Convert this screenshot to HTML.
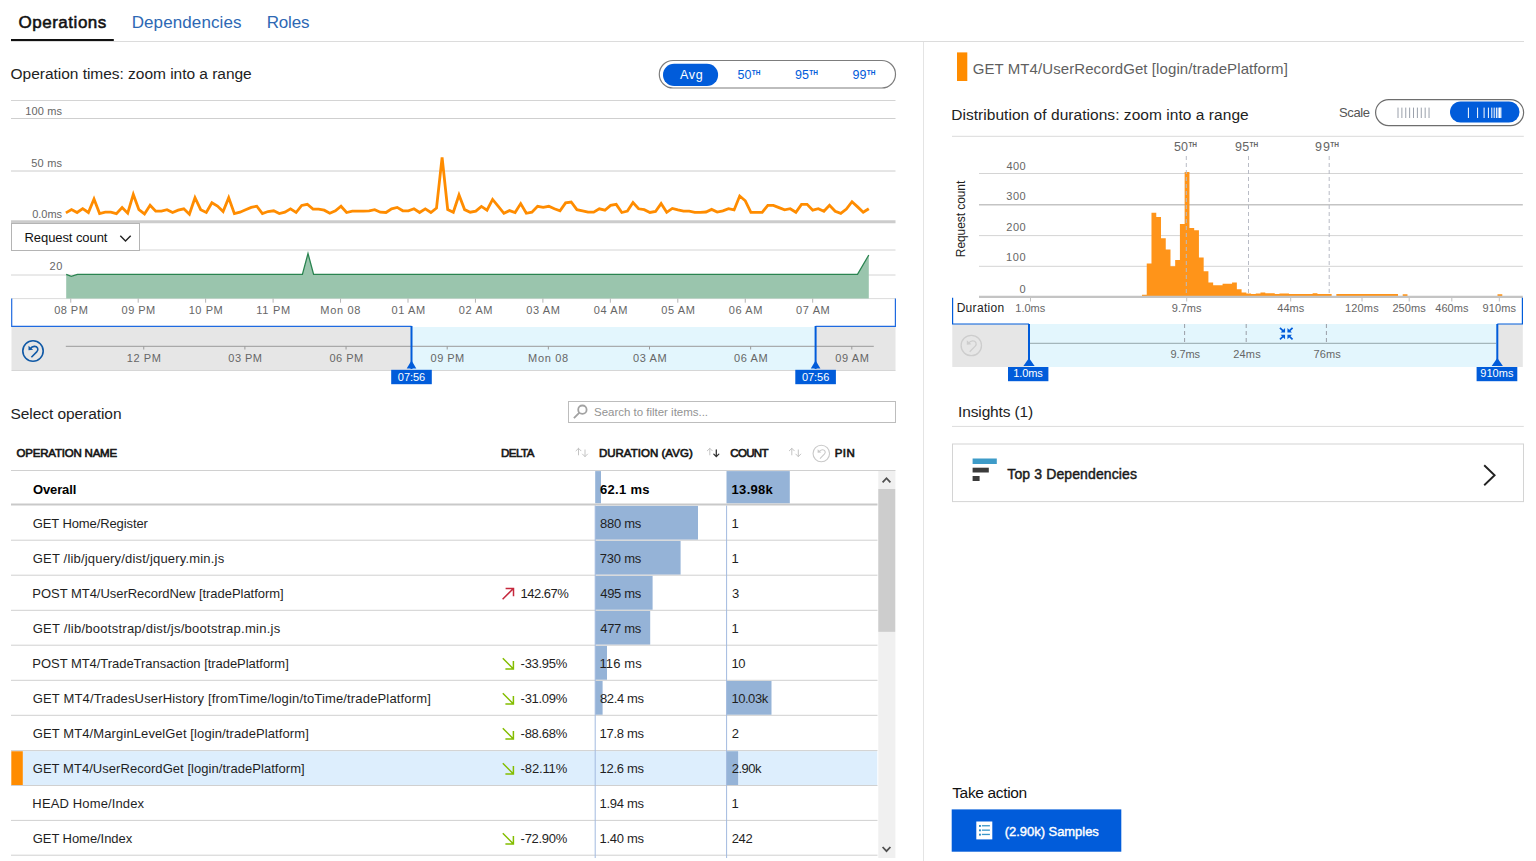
<!DOCTYPE html>
<html lang="en">
<head>
<meta charset="utf-8">
<title>Performance - Operations</title>
<style>
html,body{margin:0;padding:0;background:#fff;}
body{width:1536px;height:861px;overflow:hidden;position:relative;font-family:"Liberation Sans",sans-serif;}
#page{position:absolute;left:0;top:0;width:1536px;height:861px;overflow:hidden;background:#fff;}
#gfx{position:absolute;left:0;top:0;}
.t{position:absolute;white-space:pre;font-family:"Liberation Sans",sans-serif;}
</style>
</head>
<body>
<div id="page">
<svg id="gfx" width="1536" height="861" viewBox="0 0 1536 861">
<line x1="11" y1="41.5" x2="1524" y2="41.5" stroke="#dcdcdc" stroke-width="1" />
<rect x="11.00" y="39.00" width="102.80" height="2.00" fill="#111" />
<line x1="923.5" y1="42" x2="923.5" y2="861" stroke="#e4e4e4" stroke-width="1" />
<rect x="659.3" y="60.5" width="236.2" height="27.5" rx="13.75" fill="#fff" stroke="#7d7d7d" stroke-width="1.2"/>
<rect x="663" y="63.8" width="55.1" height="22.3" rx="11.15" fill="#015cda"/>
<line x1="11" y1="100.5" x2="895.5" y2="100.5" stroke="#d4d4d4" stroke-width="1" />
<line x1="11" y1="118.5" x2="895.5" y2="118.5" stroke="#cfcfcf" stroke-width="1" />
<line x1="11" y1="171" x2="895.5" y2="171" stroke="#cccccc" stroke-width="1" />
<line x1="11" y1="221.7" x2="895.5" y2="221.7" stroke="#cccccc" stroke-width="3" />
<polyline points="65.9,212.9 71.5,209.5 77.1,212.5 82.7,208.6 88.4,212.5 94.0,199.0 99.6,213.6 105.2,212.2 110.8,212.2 116.4,213.6 122.1,207.5 127.7,213.2 133.3,194.4 138.9,209.7 144.5,213.9 150.1,205.2 155.7,211.1 161.4,211.1 167.0,209.7 172.6,212.5 178.2,210.2 183.8,208.8 189.4,214.3 195.0,197.7 200.7,209.7 206.3,212.5 211.9,202.7 217.5,206.1 223.1,211.5 228.7,197.7 234.4,213.6 240.0,212.2 245.6,209.8 251.2,207.4 256.8,206.2 262.4,213.6 268.0,211.5 273.7,210.8 279.3,213.6 284.9,212.2 290.5,208.9 296.1,212.5 301.7,205.4 307.3,204.3 313.0,209.1 318.6,209.1 324.2,210.2 329.8,213.3 335.4,210.8 341.0,206.2 346.6,212.5 352.3,211.1 357.9,211.1 363.5,211.1 369.1,210.8 374.7,209.7 380.3,212.2 386.0,212.5 391.6,208.8 397.2,207.4 402.8,210.8 408.4,210.8 414.0,208.8 419.6,212.5 425.3,208.9 430.9,212.5 436.5,208.1 442.1,157.4 447.7,209.5 453.3,212.2 459.0,195.0 464.6,209.6 470.2,212.2 475.8,211.1 481.4,206.4 487.0,210.2 492.6,199.4 498.3,206.3 503.9,213.3 509.5,210.6 515.1,212.5 520.7,203.6 526.3,213.3 531.9,212.2 537.6,206.3 543.2,207.4 548.8,206.3 554.4,208.8 560.0,210.8 565.6,202.9 571.2,202.0 576.9,209.7 582.5,210.8 588.1,212.2 593.7,212.2 599.3,208.8 604.9,210.2 610.6,205.4 616.2,204.4 621.8,212.5 627.4,211.1 633.0,202.6 638.6,208.8 644.2,209.7 649.9,212.5 655.5,211.5 661.1,203.6 666.7,212.3 672.3,208.4 677.9,209.9 683.5,211.2 689.2,211.2 694.8,212.3 700.4,212.3 706.0,212.0 711.6,209.4 717.2,212.0 722.9,210.9 728.5,208.7 734.1,209.9 739.7,196.0 745.3,200.8 750.9,212.3 756.5,212.3 762.2,212.3 767.8,205.4 773.4,205.4 779.0,207.6 784.6,209.9 790.2,208.7 795.9,212.3 801.5,204.4 807.1,204.4 812.7,210.2 818.3,208.7 823.9,211.2 829.5,205.2 835.2,211.2 840.8,213.4 846.4,209.0 852.0,201.7 857.6,206.9 863.2,212.3 868.8,208.7" fill="none" stroke="#ff8c00" stroke-width="2.8" stroke-linejoin="miter"/>
<rect x="11.5" y="223.5" width="128" height="27" fill="#fff" stroke="#b4b4b4" stroke-width="1"/>
<polyline points="120.3,235.8 125.5,241 130.7,235.8" fill="none" stroke="#222" stroke-width="1.4"/>
<line x1="140" y1="250" x2="895.5" y2="250" stroke="#d4d4d4" stroke-width="1" />
<line x1="11.5" y1="298.6" x2="895.5" y2="298.6" stroke="#dcdcdc" stroke-width="1" />
<line x1="11" y1="275" x2="895.5" y2="275" stroke="#d4d4d4" stroke-width="1" />
<polygon points="66.2,274.4 71.3,276.4 77.4,274.4 302.4,274.4 308.0,253.5 313.6,274.4 857.5,274.4 868.8,255.0 868.8,298.5 66.2,298.5" fill="#9ac5ad"/>
<polyline points="66.2,274.4 71.3,276.4 77.4,274.4 302.4,274.4 308.0,253.5 313.6,274.4 857.5,274.4 868.8,255.0" fill="none" stroke="#2a8450" stroke-width="1.3"/>
<line x1="70.75" y1="298.5" x2="70.75" y2="302.7" stroke="#b4b4b4" stroke-width="1" />
<line x1="138.20" y1="298.5" x2="138.20" y2="302.7" stroke="#b4b4b4" stroke-width="1" />
<line x1="205.65" y1="298.5" x2="205.65" y2="302.7" stroke="#b4b4b4" stroke-width="1" />
<line x1="273.10" y1="298.5" x2="273.10" y2="302.7" stroke="#b4b4b4" stroke-width="1" />
<line x1="340.55" y1="298.5" x2="340.55" y2="302.7" stroke="#b4b4b4" stroke-width="1" />
<line x1="408.00" y1="298.5" x2="408.00" y2="302.7" stroke="#b4b4b4" stroke-width="1" />
<line x1="475.45" y1="298.5" x2="475.45" y2="302.7" stroke="#b4b4b4" stroke-width="1" />
<line x1="542.90" y1="298.5" x2="542.90" y2="302.7" stroke="#b4b4b4" stroke-width="1" />
<line x1="610.35" y1="298.5" x2="610.35" y2="302.7" stroke="#b4b4b4" stroke-width="1" />
<line x1="677.80" y1="298.5" x2="677.80" y2="302.7" stroke="#b4b4b4" stroke-width="1" />
<line x1="745.25" y1="298.5" x2="745.25" y2="302.7" stroke="#b4b4b4" stroke-width="1" />
<line x1="812.70" y1="298.5" x2="812.70" y2="302.7" stroke="#b4b4b4" stroke-width="1" />
<rect x="11.50" y="327.00" width="884.00" height="43.50" fill="#e6e6e6" />
<rect x="411.50" y="327.00" width="404.00" height="43.50" fill="#e3f6fd" />
<line x1="11.5" y1="370.5" x2="895.5" y2="370.5" stroke="#d6d6d6" stroke-width="1" />
<polyline points="11.7,298.5 11.7,326.4 411.5,326.4" fill="none" stroke="#1f6ae0" stroke-width="1.2"/>
<polyline points="815.6,326.4 895.4,326.4 895.4,298.5" fill="none" stroke="#1f6ae0" stroke-width="1.2"/>
<line x1="65.8" y1="346.3" x2="873.8" y2="346.3" stroke="#9a9a9a" stroke-width="1" />
<line x1="143.75" y1="346.3" x2="143.75" y2="349.5" stroke="#9a9a9a" stroke-width="1" />
<line x1="244.90" y1="346.3" x2="244.90" y2="349.5" stroke="#9a9a9a" stroke-width="1" />
<line x1="346.05" y1="346.3" x2="346.05" y2="349.5" stroke="#9a9a9a" stroke-width="1" />
<line x1="447.20" y1="346.3" x2="447.20" y2="349.5" stroke="#9a9a9a" stroke-width="1" />
<line x1="548.35" y1="346.3" x2="548.35" y2="349.5" stroke="#9a9a9a" stroke-width="1" />
<line x1="649.50" y1="346.3" x2="649.50" y2="349.5" stroke="#9a9a9a" stroke-width="1" />
<line x1="750.65" y1="346.3" x2="750.65" y2="349.5" stroke="#9a9a9a" stroke-width="1" />
<line x1="851.80" y1="346.3" x2="851.80" y2="349.5" stroke="#9a9a9a" stroke-width="1" />
<line x1="411.5" y1="326" x2="411.5" y2="369" stroke="#015cda" stroke-width="2" />
<polygon points="406.7,368.5 416.3,368.5 411.5,360.5" fill="#015cda"/>
<rect x="391.20" y="369.80" width="40.60" height="14.40" fill="#015cda" />
<line x1="815.6" y1="326" x2="815.6" y2="369" stroke="#015cda" stroke-width="2" />
<polygon points="810.8000000000001,368.5 820.4,368.5 815.6,360.5" fill="#015cda"/>
<rect x="795.30" y="369.80" width="40.60" height="14.40" fill="#015cda" />
<g fill="none" stroke="#1059a6" stroke-width="1.6"><circle cx="33" cy="351" r="10.20"/><path d="M31.40 357.20 L36.70 351.90 C39.20 349.30 37.40 346.30 34.30 346.40 C32.60 346.50 31.20 347.50 30.20 348.90"/><polygon points="28.50,345.70 28.50,350.20 33.10,349.70" fill="#1059a6" stroke="none"/></g>
<rect x="568.5" y="401.5" width="327" height="21" fill="#fff" stroke="#bdbdbd" stroke-width="1"/>
<g fill="none" stroke="#a2a2a2" stroke-width="1.8"><circle cx="582.4" cy="409.7" r="4.2"/><line x1="579.4" y1="412.7" x2="573.9" y2="418.2"/></g>
<g fill="none" stroke-width="1" stroke-linecap="round"><path d="M578.5 454.9 V448.3 M576 450.8 L578.5 448.3 L581 450.8" stroke="#c4c4c4"/><path d="M585 449.90000000000003 V456.59999999999997 M582.5 454.09999999999997 L585 456.59999999999997 L587.5 454.09999999999997" stroke="#c4c4c4" stroke-width="1"/></g>
<g fill="none" stroke-width="1" stroke-linecap="round"><path d="M709.8 454.9 V448.3 M707.3 450.8 L709.8 448.3 L712.3 450.8" stroke="#c4c4c4"/><path d="M716.3 449.90000000000003 V456.59999999999997 M713.8 454.09999999999997 L716.3 456.59999999999997 L718.8 454.09999999999997" stroke="#333" stroke-width="1.3"/></g>
<g fill="none" stroke-width="1" stroke-linecap="round"><path d="M791.8 454.9 V448.3 M789.3 450.8 L791.8 448.3 L794.3 450.8" stroke="#c4c4c4"/><path d="M798.3 449.90000000000003 V456.59999999999997 M795.8 454.09999999999997 L798.3 456.59999999999997 L800.8 454.09999999999997" stroke="#c4c4c4" stroke-width="1"/></g>
<g fill="none" stroke="#c9c9c9" stroke-width="1.1"><circle cx="821.3" cy="453.5" r="8.26"/><path d="M820.00 458.52 L824.30 454.23 C826.32 452.12 824.86 449.69 822.35 449.77 C820.98 449.86 819.84 450.67 819.03 451.80"/><polygon points="817.65,449.21 817.65,452.85 821.38,452.45" fill="#c9c9c9" stroke="none"/></g>
<line x1="11" y1="470.5" x2="895.5" y2="470.5" stroke="#d0d0d0" stroke-width="1" />
<rect x="595.20" y="471.10" width="5.80" height="32.30" fill="#95b3d7" />
<rect x="726.50" y="471.10" width="63.30" height="32.30" fill="#95b3d7" />
<rect x="595.20" y="505.80" width="102.80" height="33.90" fill="#95b3d7" />
<rect x="595.20" y="540.80" width="85.40" height="33.90" fill="#95b3d7" />
<rect x="595.20" y="575.80" width="57.40" height="34.00" fill="#95b3d7" />
<g fill="none" stroke="#c5283d" stroke-width="1.5"><path d="M502.6 599.3 L513.4 588.5 M505.6 588.4 H513.5 V596.3"/></g>
<rect x="595.20" y="610.90" width="55.00" height="33.80" fill="#95b3d7" />
<rect x="595.20" y="645.80" width="11.80" height="34.00" fill="#95b3d7" />
<g fill="none" stroke="#84bd00" stroke-width="1.5"><path d="M502.8 658.3 L513.2 668.7 M505.4 668.9 H513.4 V660.9"/></g>
<rect x="595.20" y="680.90" width="7.40" height="33.90" fill="#95b3d7" />
<rect x="726.50" y="680.90" width="45.00" height="33.90" fill="#95b3d7" />
<g fill="none" stroke="#84bd00" stroke-width="1.5"><path d="M502.8 693.3 L513.2 703.7 M505.4 703.9 H513.4 V695.9"/></g>
<g fill="none" stroke="#84bd00" stroke-width="1.5"><path d="M502.8 728.3 L513.2 738.7 M505.4 738.9 H513.4 V730.9"/></g>
<rect x="22.80" y="751.20" width="854.50" height="34.10" fill="#ddeefd" />
<rect x="11.30" y="751.20" width="11.50" height="34.10" fill="#ff8c00" />
<rect x="726.50" y="751.20" width="11.60" height="33.80" fill="#95b3d7" />
<g fill="none" stroke="#84bd00" stroke-width="1.5"><path d="M502.8 763.3 L513.2 773.7 M505.4 773.9 H513.4 V765.9"/></g>
<g fill="none" stroke="#84bd00" stroke-width="1.5"><path d="M502.8 833.3 L513.2 843.7 M505.4 843.9 H513.4 V835.9"/></g>
<line x1="11" y1="504.5" x2="877.5" y2="504.5" stroke="#c9c9c9" stroke-width="2" />
<line x1="11" y1="540.2" x2="877.5" y2="540.2" stroke="#d0d0d0" stroke-width="1" />
<line x1="11" y1="575.2" x2="877.5" y2="575.2" stroke="#d0d0d0" stroke-width="1" />
<line x1="11" y1="610.3" x2="877.5" y2="610.3" stroke="#d0d0d0" stroke-width="1" />
<line x1="11" y1="645.2" x2="877.5" y2="645.2" stroke="#d0d0d0" stroke-width="1" />
<line x1="11" y1="680.3" x2="877.5" y2="680.3" stroke="#d0d0d0" stroke-width="1" />
<line x1="11" y1="715.3" x2="877.5" y2="715.3" stroke="#d0d0d0" stroke-width="1" />
<line x1="11" y1="750.6" x2="877.5" y2="750.6" stroke="#d0d0d0" stroke-width="1" />
<line x1="11" y1="785.5" x2="877.5" y2="785.5" stroke="#d0d0d0" stroke-width="1" />
<line x1="11" y1="820.4" x2="877.5" y2="820.4" stroke="#d0d0d0" stroke-width="1" />
<line x1="11" y1="855.2" x2="877.5" y2="855.2" stroke="#d0d0d0" stroke-width="1" />
<line x1="595.2" y1="505.5" x2="595.2" y2="858" stroke="#a3badf" stroke-width="1" />
<line x1="726.6" y1="505.5" x2="726.6" y2="858" stroke="#a3badf" stroke-width="1" />
<rect x="878.30" y="471.00" width="17.10" height="387.00" fill="#f0f0f0" />
<rect x="878.30" y="489.00" width="16.90" height="142.80" fill="#cdcdcd" />
<polyline points="882.6,482.4 886.5,478.2 890.4,482.4" fill="none" stroke="#505050" stroke-width="1.8"/>
<polyline points="882.6,847 886.5,851.2 890.4,847" fill="none" stroke="#505050" stroke-width="1.8"/>
<rect x="957.00" y="52.40" width="10.30" height="28.60" fill="#ff8c00" />
<rect x="1375.6" y="99.6" width="148" height="26" rx="13" fill="#fff" stroke="#6e6e6e" stroke-width="1.2"/>
<rect x="1450" y="101.4" width="69.5" height="21.2" rx="10.6" fill="#015cda"/>
<line x1="1398.00" y1="107.6" x2="1398.00" y2="118" stroke="#9aa0ab" stroke-width="1" />
<line x1="1401.88" y1="107.6" x2="1401.88" y2="118" stroke="#9aa0ab" stroke-width="1" />
<line x1="1405.76" y1="107.6" x2="1405.76" y2="118" stroke="#9aa0ab" stroke-width="1" />
<line x1="1409.64" y1="107.6" x2="1409.64" y2="118" stroke="#9aa0ab" stroke-width="1" />
<line x1="1413.52" y1="107.6" x2="1413.52" y2="118" stroke="#9aa0ab" stroke-width="1" />
<line x1="1417.40" y1="107.6" x2="1417.40" y2="118" stroke="#9aa0ab" stroke-width="1" />
<line x1="1421.28" y1="107.6" x2="1421.28" y2="118" stroke="#9aa0ab" stroke-width="1" />
<line x1="1425.16" y1="107.6" x2="1425.16" y2="118" stroke="#9aa0ab" stroke-width="1" />
<line x1="1429.04" y1="107.6" x2="1429.04" y2="118" stroke="#9aa0ab" stroke-width="1" />
<line x1="1468.4" y1="107.6" x2="1468.4" y2="118" stroke="#fff" stroke-width="1" />
<line x1="1477.6" y1="107.6" x2="1477.6" y2="118" stroke="#fff" stroke-width="1" />
<line x1="1484.1" y1="107.6" x2="1484.1" y2="118" stroke="#fff" stroke-width="1" />
<line x1="1488.4" y1="107.6" x2="1488.4" y2="118" stroke="#fff" stroke-width="1" />
<line x1="1491.8" y1="107.6" x2="1491.8" y2="118" stroke="#fff" stroke-width="1" />
<line x1="1494.2" y1="107.6" x2="1494.2" y2="118" stroke="#fff" stroke-width="1" />
<line x1="1496.4" y1="107.6" x2="1496.4" y2="118" stroke="#fff" stroke-width="1" />
<line x1="1498.1" y1="107.6" x2="1498.1" y2="118" stroke="#fff" stroke-width="1" />
<line x1="1499.6" y1="107.6" x2="1499.6" y2="118" stroke="#fff" stroke-width="1.2" />
<line x1="1500.8" y1="107.6" x2="1500.8" y2="118" stroke="#fff" stroke-width="1.2" />
<line x1="952" y1="136.3" x2="1523.8" y2="136.3" stroke="#dadada" stroke-width="1" />
<line x1="979" y1="173.5" x2="1522.8" y2="173.5" stroke="#d4d4d4" stroke-width="1" />
<line x1="979" y1="204.8" x2="1522.8" y2="204.8" stroke="#c4c4c4" stroke-width="1.6" />
<line x1="979" y1="235.6" x2="1522.8" y2="235.6" stroke="#d4d4d4" stroke-width="1" />
<line x1="979" y1="266.3" x2="1522.8" y2="266.3" stroke="#d4d4d4" stroke-width="1" />
<path d="M1142.00 296.9V294.64H1146.79V296.9ZM1146.74 296.9V263.58H1151.53V296.9ZM1151.48 296.9V212.68H1156.27V296.9ZM1156.22 296.9V217.00H1161.01V296.9ZM1160.96 296.9V238.28H1165.75V296.9ZM1165.70 296.9V249.39H1170.49V296.9ZM1170.44 296.9V266.36H1175.23V296.9ZM1175.18 296.9V259.88H1179.97V296.9ZM1179.92 296.9V224.09H1184.71V296.9ZM1184.66 296.9V171.96H1189.45V296.9ZM1189.40 296.9V228.10H1194.19V296.9ZM1194.14 296.9V230.26H1198.93V296.9ZM1198.88 296.9V257.41H1203.67V296.9ZM1203.62 296.9V271.29H1208.41V296.9ZM1208.36 296.9V282.40H1213.15V296.9ZM1213.10 296.9V285.18H1217.89V296.9ZM1217.84 296.9V285.18H1222.63V296.9ZM1222.58 296.9V283.63H1227.37V296.9ZM1227.32 296.9V283.63H1232.11V296.9ZM1232.06 296.9V282.40H1236.85V296.9ZM1236.80 296.9V289.19H1241.59V296.9ZM1241.54 296.9V292.38H1246.33V296.9ZM1246.28 296.9V293.51H1251.07V296.9ZM1251.02 296.9V293.89H1255.81V296.9ZM1255.76 296.9V293.51H1260.55V296.9ZM1260.50 296.9V292.38H1265.29V296.9ZM1265.24 296.9V293.14H1270.03V296.9ZM1269.98 296.9V293.14H1274.77V296.9ZM1274.72 296.9V293.89H1279.51V296.9ZM1279.46 296.9V293.51H1284.25V296.9ZM1284.20 296.9V293.51H1288.99V296.9ZM1288.94 296.9V293.89H1293.73V296.9ZM1293.68 296.9V293.89H1298.47V296.9ZM1298.42 296.9V293.89H1303.21V296.9ZM1303.16 296.9V293.89H1307.95V296.9ZM1307.90 296.9V293.89H1312.69V296.9ZM1312.64 296.9V293.14H1317.43V296.9ZM1317.38 296.9V293.89H1322.17V296.9ZM1322.12 296.9V293.89H1326.91V296.9ZM1326.86 296.9V293.89H1331.65V296.9ZM1336.34 296.9V293.89H1341.13V296.9ZM1341.08 296.9V293.89H1345.87V296.9ZM1345.82 296.9V293.89H1350.61V296.9ZM1350.56 296.9V293.89H1355.35V296.9ZM1355.30 296.9V293.89H1360.09V296.9ZM1360.04 296.9V293.89H1364.83V296.9ZM1364.78 296.9V293.89H1369.57V296.9ZM1369.52 296.9V293.89H1374.31V296.9ZM1374.26 296.9V293.89H1379.05V296.9ZM1379.00 296.9V293.89H1383.79V296.9ZM1383.74 296.9V293.89H1388.53V296.9ZM1388.48 296.9V293.89H1393.27V296.9ZM1393.22 296.9V293.89H1398.01V296.9ZM1402.70 296.9V294.27H1407.49V296.9ZM1497.50 296.9V294.27H1502.29V296.9Z" fill="#ff9419"/>
<line x1="979" y1="296.9" x2="1522.8" y2="296.9" stroke="#c4c4c4" stroke-width="2.4" />
<line x1="1186.3" y1="156" x2="1186.3" y2="296" stroke="#b9bcc6" stroke-width="1" stroke-dasharray="4 3"/>
<line x1="1248.5" y1="156" x2="1248.5" y2="296" stroke="#b9bcc6" stroke-width="1" stroke-dasharray="4 3"/>
<line x1="1329.2" y1="156" x2="1329.2" y2="296" stroke="#b9bcc6" stroke-width="1" stroke-dasharray="4 3"/>
<line x1="1030.5" y1="298" x2="1030.5" y2="301.5" stroke="#c0c0c0" stroke-width="1" />
<line x1="1186.7" y1="298" x2="1186.7" y2="301.5" stroke="#c0c0c0" stroke-width="1" />
<line x1="1290.7" y1="298" x2="1290.7" y2="301.5" stroke="#c0c0c0" stroke-width="1" />
<line x1="1362" y1="298" x2="1362" y2="301.5" stroke="#c0c0c0" stroke-width="1" />
<line x1="1409.2" y1="298" x2="1409.2" y2="301.5" stroke="#c0c0c0" stroke-width="1" />
<line x1="1451.8" y1="298" x2="1451.8" y2="301.5" stroke="#c0c0c0" stroke-width="1" />
<line x1="1499.3" y1="298" x2="1499.3" y2="301.5" stroke="#c0c0c0" stroke-width="1" />
<rect x="952.30" y="324.00" width="570.50" height="43.00" fill="#e6e6e6" />
<rect x="1029.00" y="324.00" width="468.40" height="43.00" fill="#e3f6fd" />
<polyline points="952.6,297.8 952.6,324 1029,324" fill="none" stroke="#015cda" stroke-width="1.2"/>
<polyline points="1497.3,324 1522.4,324 1522.4,297.8" fill="none" stroke="#015cda" stroke-width="1.2"/>
<line x1="1029" y1="343.4" x2="1496" y2="343.4" stroke="#a4b6bb" stroke-width="1.2" />
<line x1="1184.6" y1="324" x2="1184.6" y2="345" stroke="#9a9da6" stroke-width="1" stroke-dasharray="4 3"/>
<line x1="1246.2" y1="324" x2="1246.2" y2="345" stroke="#9a9da6" stroke-width="1" stroke-dasharray="4 3"/>
<line x1="1326.4" y1="324" x2="1326.4" y2="345" stroke="#9a9da6" stroke-width="1" stroke-dasharray="4 3"/>
<line x1="1029" y1="324" x2="1029" y2="366" stroke="#015cda" stroke-width="2" />
<polygon points="1023.4,366 1034.6,366 1029,358" fill="#015cda"/>
<rect x="1008.00" y="367.00" width="40.40" height="14.20" fill="#015cda" />
<line x1="1497.3" y1="324" x2="1497.3" y2="366" stroke="#015cda" stroke-width="2" />
<polygon points="1491.7,366 1502.8999999999999,366 1497.3,358" fill="#015cda"/>
<rect x="1476.60" y="367.00" width="40.70" height="14.20" fill="#015cda" />
<g fill="none" stroke="#cdcdcd" stroke-width="1.3"><circle cx="971.3" cy="345.5" r="10.20"/><path d="M969.70 351.70 L975.00 346.40 C977.50 343.80 975.70 340.80 972.60 340.90 C970.90 341.00 969.50 342.00 968.50 343.40"/><polygon points="966.80,340.20 966.80,344.70 971.40,344.20" fill="#cdcdcd" stroke="none"/></g>
<g fill="#015cda"><polygon points="1285.05,327.95 1285.05,332.55 1280.55,332.55"/><line x1="1279.95" y1="327.95" x2="1283.65" y2="331.35" stroke="#015cda" stroke-width="1.7"/><polygon points="1285.05,339.35 1285.05,334.75 1280.55,334.75"/><line x1="1279.95" y1="339.35" x2="1283.65" y2="335.95" stroke="#015cda" stroke-width="1.7"/><polygon points="1287.45,327.95 1287.45,332.55 1291.95,332.55"/><line x1="1292.55" y1="327.95" x2="1288.85" y2="331.35" stroke="#015cda" stroke-width="1.7"/><polygon points="1287.45,339.35 1287.45,334.75 1291.95,334.75"/><line x1="1292.55" y1="339.35" x2="1288.85" y2="335.95" stroke="#015cda" stroke-width="1.7"/></g>
<line x1="952" y1="426.4" x2="1523.8" y2="426.4" stroke="#dcdcdc" stroke-width="1" />
<rect x="952.5" y="444" width="571" height="57.6" fill="#fff" stroke="#d4d4d4" stroke-width="1"/>
<rect x="972.60" y="458.50" width="24.20" height="5.50" fill="#3d9bc8" />
<rect x="972.60" y="467.70" width="16.20" height="4.80" fill="#3b3b3b" />
<rect x="972.60" y="476.00" width="7.00" height="5.00" fill="#3b3b3b" />
<polyline points="1484.2,465.2 1494.6,475.2 1484.2,485.2" fill="none" stroke="#222" stroke-width="1.9"/>
<rect x="951.70" y="809.40" width="169.60" height="42.30" fill="#015cda" />
<rect x="976.3" y="821.5" width="16" height="17.9" fill="#fff"/>
<rect x="979.00" y="825.00" width="1.90" height="1.90" fill="#2b8ac6" />
<rect x="981.90" y="825.10" width="8.00" height="1.30" fill="#3996c9" />
<rect x="979.00" y="829.40" width="1.90" height="1.90" fill="#2b8ac6" />
<rect x="981.90" y="829.50" width="8.00" height="1.30" fill="#3996c9" />
<rect x="979.00" y="833.70" width="1.90" height="1.90" fill="#2b8ac6" />
<rect x="981.90" y="833.80" width="8.00" height="1.30" fill="#3996c9" />
</svg>
<span class="t" style="left:18.51px;top:14px;font-size:17px;line-height:17px;color:#111;letter-spacing:0.520px;-webkit-text-stroke:0.55px #111;">Operations</span>
<span class="t" style="left:131.64px;top:14px;font-size:17px;line-height:17px;color:#2d68b4;letter-spacing:0.113px;">Dependencies</span>
<span class="t" style="left:266.64px;top:14px;font-size:17px;line-height:17px;color:#2d68b4;letter-spacing:-0.120px;">Roles</span>
<span class="t" style="left:10.55px;top:66px;font-size:15.5px;line-height:15.5px;color:#222;letter-spacing:-0.029px;">Operation times: zoom into a range</span>
<span class="t" style="left:680.00px;top:69px;font-size:12.5px;line-height:12.5px;color:#fff;letter-spacing:0.750px;">Avg</span>
<span class="t" style="left:737.50px;top:69px;font-size:12.5px;line-height:12.5px;color:#015cda;">50</span>
<span class="t" style="left:751.78px;top:70px;font-size:6.5px;line-height:6.5px;color:#015cda;font-weight:bold;">TH</span>
<span class="t" style="left:794.94px;top:69px;font-size:12.5px;line-height:12.5px;color:#015cda;letter-spacing:0.130px;">95</span>
<span class="t" style="left:809.28px;top:70px;font-size:6.5px;line-height:6.5px;color:#015cda;font-weight:bold;">TH</span>
<span class="t" style="left:852.44px;top:69px;font-size:12.5px;line-height:12.5px;color:#015cda;letter-spacing:0.192px;">99</span>
<span class="t" style="left:866.78px;top:70px;font-size:6.5px;line-height:6.5px;color:#015cda;font-weight:bold;">TH</span>
<span class="t" style="left:25.18px;top:106px;font-size:11px;line-height:11px;color:#666;letter-spacing:0.166px;">100 ms</span>
<span class="t" style="left:31.16px;top:158px;font-size:11px;line-height:11px;color:#666;letter-spacing:0.238px;">50 ms</span>
<span class="t" style="left:32.16px;top:209px;font-size:11px;line-height:11px;color:#666;letter-spacing:-0.012px;">0.0ms</span>
<span class="t" style="left:24.56px;top:231px;font-size:13px;line-height:13px;color:#111;letter-spacing:-0.082px;">Request count</span>
<span class="t" style="left:49.45px;top:261px;font-size:11px;line-height:11px;color:#666;letter-spacing:0.725px;">20</span>
<span class="t" style="left:54.16px;top:305px;font-size:11px;line-height:11px;color:#666;letter-spacing:0.471px;">08 PM</span>
<span class="t" style="left:121.61px;top:305px;font-size:11px;line-height:11px;color:#666;letter-spacing:0.471px;">09 PM</span>
<span class="t" style="left:188.68px;top:305px;font-size:11px;line-height:11px;color:#666;letter-spacing:0.567px;">10 PM</span>
<span class="t" style="left:256.13px;top:305px;font-size:11px;line-height:11px;color:#666;letter-spacing:0.760px;">11 PM</span>
<span class="t" style="left:320.30px;top:305px;font-size:11px;line-height:11px;color:#666;letter-spacing:0.677px;">Mon 08</span>
<span class="t" style="left:391.41px;top:305px;font-size:11px;line-height:11px;color:#666;letter-spacing:0.622px;">01 AM</span>
<span class="t" style="left:458.86px;top:305px;font-size:11px;line-height:11px;color:#666;letter-spacing:0.622px;">02 AM</span>
<span class="t" style="left:526.31px;top:305px;font-size:11px;line-height:11px;color:#666;letter-spacing:0.622px;">03 AM</span>
<span class="t" style="left:593.76px;top:305px;font-size:11px;line-height:11px;color:#666;letter-spacing:0.622px;">04 AM</span>
<span class="t" style="left:661.21px;top:305px;font-size:11px;line-height:11px;color:#666;letter-spacing:0.622px;">05 AM</span>
<span class="t" style="left:728.66px;top:305px;font-size:11px;line-height:11px;color:#666;letter-spacing:0.622px;">06 AM</span>
<span class="t" style="left:796.11px;top:305px;font-size:11px;line-height:11px;color:#666;letter-spacing:0.622px;">07 AM</span>
<span class="t" style="left:126.77px;top:353px;font-size:11px;line-height:11px;color:#666;letter-spacing:0.567px;">12 PM</span>
<span class="t" style="left:228.31px;top:353px;font-size:11px;line-height:11px;color:#666;letter-spacing:0.471px;">03 PM</span>
<span class="t" style="left:329.46px;top:353px;font-size:11px;line-height:11px;color:#666;letter-spacing:0.471px;">06 PM</span>
<span class="t" style="left:430.61px;top:353px;font-size:11px;line-height:11px;color:#666;letter-spacing:0.471px;">09 PM</span>
<span class="t" style="left:528.10px;top:353px;font-size:11px;line-height:11px;color:#666;letter-spacing:0.677px;">Mon 08</span>
<span class="t" style="left:632.91px;top:353px;font-size:11px;line-height:11px;color:#666;letter-spacing:0.622px;">03 AM</span>
<span class="t" style="left:734.06px;top:353px;font-size:11px;line-height:11px;color:#666;letter-spacing:0.622px;">06 AM</span>
<span class="t" style="left:835.21px;top:353px;font-size:11px;line-height:11px;color:#666;letter-spacing:0.622px;">09 AM</span>
<span class="t" style="left:397.81px;top:372px;font-size:11px;line-height:11px;color:#fff;letter-spacing:-0.030px;">07:56</span>
<span class="t" style="left:801.91px;top:372px;font-size:11px;line-height:11px;color:#fff;letter-spacing:-0.030px;">07:56</span>
<span class="t" style="left:10.55px;top:406px;font-size:15.5px;line-height:15.5px;color:#222;letter-spacing:-0.069px;">Select operation</span>
<span class="t" style="left:593.98px;top:407px;font-size:11.5px;line-height:11.5px;color:#939393;letter-spacing:-0.013px;">Search to filter items...</span>
<span class="t" style="left:16.54px;top:448px;font-size:11.5px;line-height:11.5px;color:#151515;letter-spacing:-0.205px;-webkit-text-stroke:0.62px #151515;">OPERATION NAME</span>
<span class="t" style="left:500.99px;top:448px;font-size:11.5px;line-height:11.5px;color:#151515;letter-spacing:-0.491px;-webkit-text-stroke:0.62px #151515;">DELTA</span>
<span class="t" style="left:598.89px;top:448px;font-size:11.5px;line-height:11.5px;color:#151515;letter-spacing:0.027px;-webkit-text-stroke:0.62px #151515;">DURATION (AVG)</span>
<span class="t" style="left:730.34px;top:448px;font-size:11.5px;line-height:11.5px;color:#151515;letter-spacing:-0.674px;-webkit-text-stroke:0.62px #151515;">COUNT</span>
<span class="t" style="left:834.79px;top:448px;font-size:11.5px;line-height:11.5px;color:#151515;letter-spacing:0.386px;-webkit-text-stroke:0.62px #151515;">PIN</span>
<span class="t" style="left:32.88px;top:483px;font-size:13px;line-height:13px;color:#000;letter-spacing:-0.101px;font-weight:bold;">Overall</span>
<span class="t" style="left:600.04px;top:483px;font-size:13px;line-height:13px;color:#000;letter-spacing:0.294px;font-weight:bold;">62.1 ms</span>
<span class="t" style="left:731.62px;top:483px;font-size:13px;line-height:13px;color:#000;letter-spacing:0.280px;font-weight:bold;">13.98k</span>
<span class="t" style="left:32.75px;top:517px;font-size:13px;line-height:13px;color:#1f1f1f;letter-spacing:-0.106px;">GET Home/Register</span>
<span class="t" style="left:599.91px;top:517px;font-size:13px;line-height:13px;color:#1f1f1f;letter-spacing:-0.240px;">880 ms</span>
<span class="t" style="left:731.42px;top:517px;font-size:13px;line-height:13px;color:#1f1f1f;">1</span>
<span class="t" style="left:32.75px;top:552px;font-size:13px;line-height:13px;color:#1f1f1f;letter-spacing:0.188px;">GET /lib/jquery/dist/jquery.min.js</span>
<span class="t" style="left:599.85px;top:552px;font-size:13px;line-height:13px;color:#1f1f1f;letter-spacing:-0.227px;">730 ms</span>
<span class="t" style="left:731.42px;top:552px;font-size:13px;line-height:13px;color:#1f1f1f;">1</span>
<span class="t" style="left:32.36px;top:587px;font-size:13px;line-height:13px;color:#1f1f1f;letter-spacing:-0.036px;">POST MT4/UserRecordNew [tradePlatform]</span>
<span class="t" style="left:520.62px;top:587px;font-size:13px;line-height:13px;color:#1f1f1f;letter-spacing:-0.537px;">142.67%</span>
<span class="t" style="left:600.24px;top:587px;font-size:13px;line-height:13px;color:#1f1f1f;letter-spacing:-0.305px;">495 ms</span>
<span class="t" style="left:731.88px;top:587px;font-size:13px;line-height:13px;color:#1f1f1f;">3</span>
<span class="t" style="left:32.75px;top:622px;font-size:13px;line-height:13px;color:#1f1f1f;letter-spacing:0.254px;">GET /lib/bootstrap/dist/js/bootstrap.min.js</span>
<span class="t" style="left:600.24px;top:622px;font-size:13px;line-height:13px;color:#1f1f1f;letter-spacing:-0.305px;">477 ms</span>
<span class="t" style="left:731.42px;top:622px;font-size:13px;line-height:13px;color:#1f1f1f;">1</span>
<span class="t" style="left:32.36px;top:657px;font-size:13px;line-height:13px;color:#1f1f1f;letter-spacing:-0.044px;">POST MT4/TradeTransaction [tradePlatform]</span>
<span class="t" style="left:520.62px;top:657px;font-size:13px;line-height:13px;color:#1f1f1f;letter-spacing:-0.298px;">-33.95%</span>
<span class="t" style="left:599.52px;top:657px;font-size:13px;line-height:13px;color:#1f1f1f;letter-spacing:0.093px;">116 ms</span>
<span class="t" style="left:731.42px;top:657px;font-size:13px;line-height:13px;color:#1f1f1f;letter-spacing:-0.400px;">10</span>
<span class="t" style="left:32.75px;top:692px;font-size:13px;line-height:13px;color:#1f1f1f;letter-spacing:0.155px;">GET MT4/TradesUserHistory [fromTime/login/toTime/tradePlatform]</span>
<span class="t" style="left:520.62px;top:692px;font-size:13px;line-height:13px;color:#1f1f1f;letter-spacing:-0.298px;">-31.09%</span>
<span class="t" style="left:599.91px;top:692px;font-size:13px;line-height:13px;color:#1f1f1f;letter-spacing:-0.362px;">82.4 ms</span>
<span class="t" style="left:731.42px;top:692px;font-size:13px;line-height:13px;color:#1f1f1f;letter-spacing:-0.458px;">10.03k</span>
<span class="t" style="left:32.75px;top:727px;font-size:13px;line-height:13px;color:#1f1f1f;letter-spacing:0.109px;">GET MT4/MarginLevelGet [login/tradePlatform]</span>
<span class="t" style="left:520.62px;top:727px;font-size:13px;line-height:13px;color:#1f1f1f;letter-spacing:-0.298px;">-88.68%</span>
<span class="t" style="left:599.52px;top:727px;font-size:13px;line-height:13px;color:#1f1f1f;letter-spacing:-0.297px;">17.8 ms</span>
<span class="t" style="left:731.75px;top:727px;font-size:13px;line-height:13px;color:#1f1f1f;">2</span>
<span class="t" style="left:32.75px;top:762px;font-size:13px;line-height:13px;color:#1f1f1f;letter-spacing:0.046px;">GET MT4/UserRecordGet [login/tradePlatform]</span>
<span class="t" style="left:520.62px;top:762px;font-size:13px;line-height:13px;color:#1f1f1f;letter-spacing:-0.135px;">-82.11%</span>
<span class="t" style="left:599.52px;top:762px;font-size:13px;line-height:13px;color:#1f1f1f;letter-spacing:-0.297px;">12.6 ms</span>
<span class="t" style="left:731.75px;top:762px;font-size:13px;line-height:13px;color:#1f1f1f;letter-spacing:-0.509px;">2.90k</span>
<span class="t" style="left:32.36px;top:797px;font-size:13px;line-height:13px;color:#1f1f1f;letter-spacing:0.137px;">HEAD Home/Index</span>
<span class="t" style="left:599.52px;top:797px;font-size:13px;line-height:13px;color:#1f1f1f;letter-spacing:-0.297px;">1.94 ms</span>
<span class="t" style="left:731.42px;top:797px;font-size:13px;line-height:13px;color:#1f1f1f;">1</span>
<span class="t" style="left:32.75px;top:832px;font-size:13px;line-height:13px;color:#1f1f1f;letter-spacing:-0.060px;">GET Home/Index</span>
<span class="t" style="left:520.62px;top:832px;font-size:13px;line-height:13px;color:#1f1f1f;letter-spacing:-0.298px;">-72.90%</span>
<span class="t" style="left:599.52px;top:832px;font-size:13px;line-height:13px;color:#1f1f1f;letter-spacing:-0.297px;">1.40 ms</span>
<span class="t" style="left:731.75px;top:832px;font-size:13px;line-height:13px;color:#1f1f1f;letter-spacing:-0.372px;">242</span>
<span class="t" style="left:972.65px;top:61px;font-size:15px;line-height:15px;color:#5f5f5f;letter-spacing:0.088px;">GET MT4/UserRecordGet [login/tradePlatform]</span>
<span class="t" style="left:951.16px;top:107px;font-size:15.5px;line-height:15.5px;color:#222;letter-spacing:0.047px;">Distribution of durations: zoom into a range</span>
<span class="t" style="left:1338.91px;top:106px;font-size:13px;line-height:13px;color:#555;letter-spacing:-0.332px;">Scale</span>
<span class="t" style="left:1173.90px;top:141px;font-size:12.5px;line-height:12.5px;color:#666;letter-spacing:0.205px;">50</span>
<span class="t" style="left:1188.38px;top:142px;font-size:6.5px;line-height:6.5px;color:#666;font-weight:bold;">TH</span>
<span class="t" style="left:1235.04px;top:141px;font-size:12.5px;line-height:12.5px;color:#666;letter-spacing:0.330px;">95</span>
<span class="t" style="left:1249.58px;top:142px;font-size:6.5px;line-height:6.5px;color:#666;font-weight:bold;">TH</span>
<span class="t" style="left:1315.04px;top:141px;font-size:12.5px;line-height:12.5px;color:#666;letter-spacing:1.093px;">99</span>
<span class="t" style="left:1330.28px;top:142px;font-size:6.5px;line-height:6.5px;color:#666;font-weight:bold;">TH</span>
<span class="t" style="left:1006.58px;top:161px;font-size:11px;line-height:11px;color:#666;letter-spacing:0.395px;">400</span>
<span class="t" style="left:1006.36px;top:191px;font-size:11px;line-height:11px;color:#666;letter-spacing:0.505px;">300</span>
<span class="t" style="left:1006.25px;top:222px;font-size:11px;line-height:11px;color:#666;letter-spacing:0.560px;">200</span>
<span class="t" style="left:1005.97px;top:252px;font-size:11px;line-height:11px;color:#666;letter-spacing:0.697px;">100</span>
<span class="t" style="left:1019.58px;top:284px;font-size:11px;line-height:11px;color:#666;">0</span>
<span class="t" style="left:960.70px;top:218.60px;font-size:12px;line-height:12px;color:#222;letter-spacing:-0.082px;transform:translate(-50%,-50%) rotate(-90deg);">Request count</span>
<span class="t" style="left:956.64px;top:302px;font-size:12px;line-height:12px;color:#222;letter-spacing:0.326px;">Duration</span>
<span class="t" style="left:1015.32px;top:303px;font-size:11px;line-height:11px;color:#666;letter-spacing:-0.016px;">1.0ms</span>
<span class="t" style="left:1171.86px;top:303px;font-size:11px;line-height:11px;color:#666;letter-spacing:-0.099px;">9.7ms</span>
<span class="t" style="left:1277.23px;top:303px;font-size:11px;line-height:11px;color:#666;letter-spacing:0.070px;">44ms</span>
<span class="t" style="left:1344.92px;top:303px;font-size:11px;line-height:11px;color:#666;letter-spacing:0.178px;">120ms</span>
<span class="t" style="left:1392.40px;top:303px;font-size:11px;line-height:11px;color:#666;letter-spacing:0.109px;">250ms</span>
<span class="t" style="left:1435.33px;top:303px;font-size:11px;line-height:11px;color:#666;letter-spacing:0.026px;">460ms</span>
<span class="t" style="left:1482.56px;top:303px;font-size:11px;line-height:11px;color:#666;letter-spacing:0.095px;">910ms</span>
<span class="t" style="left:1170.56px;top:349px;font-size:11px;line-height:11px;color:#666;letter-spacing:-0.099px;">9.7ms</span>
<span class="t" style="left:1233.20px;top:349px;font-size:11px;line-height:11px;color:#666;letter-spacing:0.180px;">24ms</span>
<span class="t" style="left:1313.40px;top:349px;font-size:11px;line-height:11px;color:#666;letter-spacing:0.180px;">76ms</span>
<span class="t" style="left:1013.23px;top:368px;font-size:11px;line-height:11px;color:#fff;letter-spacing:-0.116px;">1.0ms</span>
<span class="t" style="left:1480.30px;top:368px;font-size:11px;line-height:11px;color:#fff;letter-spacing:0.045px;">910ms</span>
<span class="t" style="left:958.11px;top:404px;font-size:15.5px;line-height:15.5px;color:#222;letter-spacing:-0.147px;">Insights (1)</span>
<span class="t" style="left:1007.35px;top:467px;font-size:14px;line-height:14px;color:#1a1a1a;letter-spacing:0.114px;-webkit-text-stroke:0.45px #1a1a1a;">Top 3 Dependencies</span>
<span class="t" style="left:952.19px;top:785px;font-size:15.5px;line-height:15.5px;color:#111;letter-spacing:-0.336px;">Take action</span>
<span class="t" style="left:1004.72px;top:825px;font-size:13px;line-height:13px;color:#fff;letter-spacing:-0.036px;-webkit-text-stroke:0.4px #fff;">(2.90k) Samples</span>
</div>
</body>
</html>
